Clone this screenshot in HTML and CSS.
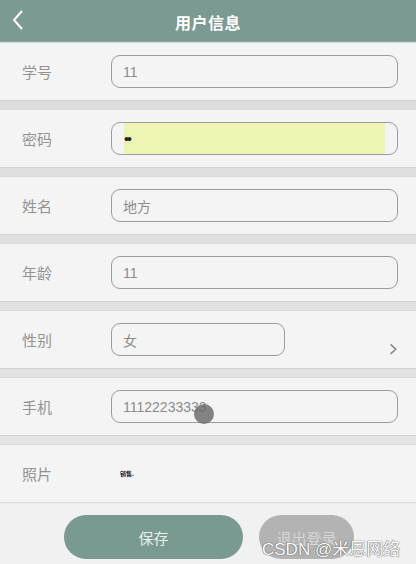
FILE: index.html
```html
<!DOCTYPE html>
<html lang="zh">
<head>
<meta charset="utf-8">
<link rel="stylesheet" href="styles.css">
</head>
<body>
<div class="app">
  <header class="topbar">
    <svg class="back" width="14" height="22" viewBox="0 0 14 22"><path d="M11 2 L3 11 L11 20" fill="none" stroke="#fff" stroke-width="2"/></svg>
    <h1 class="title">用户信息</h1>
  </header>
  <main class="form">
    <div class="row"><span class="label">学号</span><div class="field">11</div></div>
    <div class="row"><span class="label">密码</span><div class="field pwd"><span class="fill">••</span></div></div>
    <div class="row"><span class="label">姓名</span><div class="field">地方</div></div>
    <div class="row"><span class="label">年龄</span><div class="field">11</div></div>
    <div class="row"><span class="label">性别</span><div class="field short">女</div><span class="chev">›</span></div>
    <div class="row"><span class="label">手机</span><div class="field phone">11122233333<span class="touch"></span></div></div>
    <div class="row"><span class="label">照片</span><span class="photo">销售.</span></div>
  </main>
  <footer class="actions">
    <button class="btn save">保存</button>
    <button class="btn logout">退出登录</button>
    <span class="mark">CSDN @米恩网络</span>
  </footer>
</div>
</body>
</html>
```
FILE: styles.css
```css
* { box-sizing: border-box; }
html, body { margin: 0; padding: 0; }
body {
  width: 416px; height: 564px; overflow: hidden;
  background: #f1f1f1;
  font-family: "Noto Sans CJK SC", "Liberation Sans", sans-serif;
}
.topbar {
  height: 43px;
  background: #7a9a92;
  display: flex; align-items: center; justify-content: center;
  position: relative;
}
.back { position: absolute; left: 11px; top: 9px; }
.title {
  margin: 0; color: #fff; font-size: 16px; font-weight: 700;
  letter-spacing: 0.5px;
}
.form {
  display: flex; flex-direction: column; gap: 10px;
  background: linear-gradient(#dcdcdc, #e6e6e6);
}
.row {
  height: 57px;
  background: #f4f4f4;
  display: flex; align-items: center;
  padding: 0 18px 0 22px;
  position: relative;
  box-shadow: 0 1px 1px #d2d2d2, 0 -1px 1px #dadada;
}
.label {
  width: 89px; font-size: 15px; color: #939393;
}
.field {
  flex: 1; height: 33px;
  border: 1px solid #9c9c9c; border-radius: 9px;
  display: flex; align-items: center;
  padding-left: 11px;
  font-size: 14px; color: #8c8c8c;
  font-family: "Liberation Sans", "Noto Sans CJK SC", sans-serif;
  position: relative;
}
.field.pwd { padding: 0 12px 0 12px; }
.fill {
  flex: 1; align-self: stretch;
  background: #eef4b4;
  display: flex; align-items: center;
  color: #222; font-size: 14px; letter-spacing: -2px;
}
.field.short { flex: 0 0 174px; }
.chev {
  position: absolute; right: 17px; top: 24px;
  font-size: 26px; color: #777; line-height: 26px;
  font-family: "DejaVu Sans", sans-serif; font-weight: 300;
}
.touch {
  position: absolute; left: 82px; top: 13px;
  width: 20px; height: 20px; border-radius: 50%;
  background: rgba(110,110,110,0.85);
}
.photo {
  font-size: 6px; font-weight: 700; color: #222; margin-left: 9px;
}
.actions {
  position: relative;
  display: flex; align-items: center;
  padding: 12px 0 0 64px; gap: 16px;
  border-top: 1px solid #dedede;
}
.btn {
  height: 44px; border: none; border-radius: 22px;
  font-family: "Noto Sans CJK SC", sans-serif;
  font-size: 15px; color: #e8efec;
}
.save { width: 179px; background: #789a90; }
.logout { width: 95px; background: #b3b3b3; color: #d6d6d6; }
.mark {
  position: absolute; left: 262px; top: 32px;
  font-size: 17px; color: #fff;
  font-family: "Liberation Sans", "Noto Sans CJK SC", sans-serif;
  text-shadow: 0 0 1px #555, 0 0 1px #555;
}
```
